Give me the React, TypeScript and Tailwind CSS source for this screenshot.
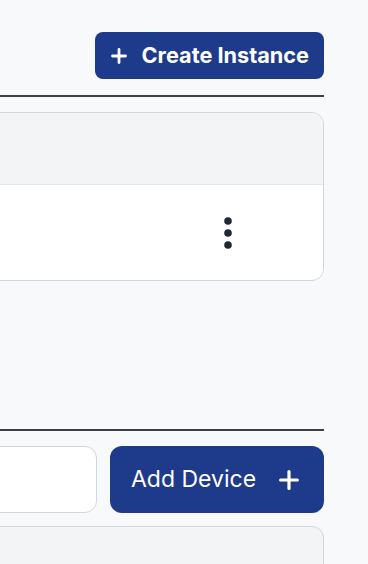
export default function App() {
  return (
    <div className="min-h-screen bg-[#f8f9fb] pt-8" style={{ fontFamily: "Inter, 'Noto Sans', sans-serif" }}>
      <div className="-ml-10 mr-[44px]">
        {/* Instances */}
        <div className="flex justify-end">
          <button className="flex h-[47px] items-center gap-[15px] whitespace-nowrap rounded-lg bg-[#1e3a8a] pl-4 pr-[15px] text-[21.7px] font-bold text-white">
            <svg width="16" height="16" viewBox="0 0 16 16" fill="none" stroke="currentColor" strokeWidth="2.8" strokeLinecap="round">
              <path d="M8 1.5v13M1.5 8h13" />
            </svg>
            Create Instance
          </button>
        </div>
        <div className="mt-4 border-b-2 border-[#3b3f4a]" />

        <div className="mt-[15px] overflow-hidden rounded-xl border border-gray-300 bg-white">
          <div className="h-[72px] border-b border-gray-200 bg-gray-100" />
          <div className="flex h-[95px] items-center justify-end pr-[91px]">
            <svg width="8" height="32" viewBox="0 0 8 32" fill="#1f2937">
              <circle cx="4" cy="4" r="3.8" />
              <circle cx="4" cy="16" r="3.8" />
              <circle cx="4" cy="28" r="3.8" />
            </svg>
          </div>
        </div>

        {/* Devices */}
        <div className="mt-[148px] border-b-2 border-[#3b3f4a]" />
        <div className="mt-[15px] flex gap-[13px]">
          <input className="h-[67px] w-0 min-w-0 flex-1 rounded-xl border border-gray-300 bg-white" />
          <button className="flex h-[67px] w-[214px] shrink-0 items-center gap-[23px] whitespace-nowrap rounded-xl bg-[#1e3a8a] pl-[21px] text-[23px] text-white">
            Add Device
            <svg width="20" height="20" viewBox="0 0 20 20" fill="none" stroke="currentColor" strokeWidth="3.2" strokeLinecap="round">
              <path d="M10 1.6v16.8M1.6 10h16.8" />
            </svg>
          </button>
        </div>
        <div className="mt-[13px] h-[80px] rounded-xl border border-gray-300 bg-gray-100" />
      </div>
    </div>
  );
}
